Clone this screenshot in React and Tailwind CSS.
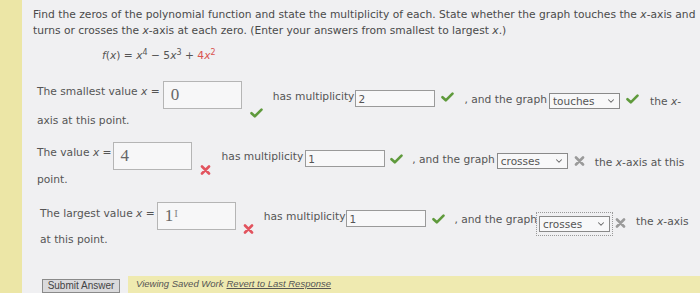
import { ChevronDown } from "lucide-react";

function Check({ className = "" }) {
  return (
    <svg width="13" height="10" viewBox="0 0 13 10" className={`shrink-0 ${className}`}>
      <path d="M1.5 5.2 L4.8 8.3 L11.5 1.6" fill="none" stroke="#5f9a3c" strokeWidth="2.6" strokeLinecap="round" strokeLinejoin="round" />
    </svg>
  );
}

function Cross({ color = "#e2535e", className = "" }) {
  return (
    <svg width="11" height="10" viewBox="0 0 11 10" className={`shrink-0 ${className}`}>
      <path d="M2 1.5 L9 8.5 M9 1.5 L2 8.5" fill="none" stroke={color} strokeWidth="2.6" strokeLinecap="round" />
    </svg>
  );
}

function X() {
  return <span className="italic">x</span>;
}

function BigInput({ value, cursor, className = "" }) {
  return (
    <div className={`flex h-[28px] w-[79px] shrink-0 items-center border border-[#b5b5b5] bg-[#f7f7f8] pl-[7px] font-['Liberation_Serif',serif] text-[17px] text-[#666] ${className}`}>
      {value}
      {cursor && <span className="-mt-[6px] ml-[1px] text-[11px] text-[#888]">I</span>}
    </div>
  );
}

function SmallInput({ value, className = "" }) {
  return (
    <div className={`flex h-[17px] w-[80px] shrink-0 items-center border border-[#9a9a9a] bg-[#f8f8f9] pl-[2px] text-[10.5px] text-[#555] ${className}`}>
      {value}
    </div>
  );
}

function Select({ value, focused, className = "" }) {
  const box = (
    <div className="flex h-[16px] w-[71px] items-center justify-between border border-[#8a8a8a] bg-[#f8f8f9] px-[3px] text-[10.5px] text-[#555]">
      {value}
      <ChevronDown size={10} strokeWidth={2.5} className="text-[#666]" />
    </div>
  );
  if (!focused) return <div className={`shrink-0 ${className}`}>{box}</div>;
  return <div className={`shrink-0 border border-dotted border-[#999] px-[2px] py-[3px] ${className}`}>{box}</div>;
}

export default function App() {
  return (
    <div className="flex h-[293px] w-[700px] overflow-hidden bg-[#f0f0f2] font-['DejaVu_Sans',sans-serif] text-[10.7px] text-[#555]">
      <div className="w-[22px] shrink-0 bg-[#ece6a6]" />
      <div className="flex min-w-0 flex-1 flex-col">
        <p className="whitespace-nowrap pl-[11px] pt-[7px] leading-[16px] text-[#4a4a4a]">
          Find the zeros of the polynomial function and state the multiplicity of each. State whether the graph touches the <X />-axis and
          <br />
          turns or crosses the <X />-axis at each zero. (Enter your answers from smallest to largest <X />.)
        </p>

        <div className="mt-[9px] h-[16px] pl-[80px] leading-[16px] text-[#555]">
          <span className="italic">f</span>(<X />) = <X />
          <sup className="text-[8px] leading-none">4</sup> − 5<X />
          <sup className="text-[8px] leading-none">3</sup> + <span className="text-[#d9534f]">4<X /><sup className="text-[8px] leading-none">2</sup></span>
        </div>

        {/* row 1 */}
        <div className="mt-[17px] flex h-[28px] items-start whitespace-nowrap pl-[15px] leading-[16px]">
          <span className="mt-[3px]">The smallest value <X /> =</span>
          <BigInput value="0" className="ml-[3px]" />
          <Check className="ml-[8px] mt-[27px]" />
          <span className="ml-[10px] mt-[8px]">has multiplicity</span>
          <SmallInput value="2" className="ml-[1px] mt-[9px]" />
          <Check className="ml-[6px] mt-[11px]" />
          <span className="ml-[10px] mt-[11px]">, and the graph</span>
          <Select value="touches" className="ml-[2px] mt-[12px]" />
          <Check className="ml-[6px] mt-[13px]" />
          <span className="ml-[11px] mt-[13px]">the <X />-</span>
        </div>
        <div className="mt-[4px] pl-[15px] leading-[16px]">axis at this point.</div>

        {/* row 2 */}
        <div className="mt-[13px] flex h-[28px] items-start whitespace-nowrap pl-[15px] leading-[16px]">
          <span className="mt-[3px]">The value <X /> =</span>
          <BigInput value="4" className="ml-[1px]" />
          <Cross className="ml-[8px] mt-[23px]" />
          <span className="ml-[11px] mt-[7px]">has multiplicity</span>
          <SmallInput value="1" className="ml-[2px] mt-[8px]" />
          <Check className="ml-[5px] mt-[12px]" />
          <span className="ml-[9px] mt-[10px]">, and the graph</span>
          <Select value="crosses" className="ml-[2px] mt-[11px]" />
          <Cross color="#9a9a9a" className="ml-[6px] mt-[14px]" />
          <span className="ml-[10px] mt-[13px]">the <X />-axis at this</span>
        </div>
        <div className="mt-[2px] pl-[15px] leading-[16px]">point.</div>

        {/* row 3 */}
        <div className="mt-[14px] flex h-[28px] items-start whitespace-nowrap pl-[18px] leading-[16px]">
          <span className="mt-[4px]">The largest value <X /> =</span>
          <BigInput value="1" cursor className="ml-[2px]" />
          <Cross className="ml-[7px] mt-[22px]" />
          <span className="ml-[10px] mt-[7px]">has multiplicity</span>
          <SmallInput value="1" className="ml-[1px] mt-[8px]" />
          <Check className="ml-[6px] mt-[12px]" />
          <span className="ml-[9px] mt-[10px]">, and the graph</span>
          <Select value="crosses" focused className="-ml-[1px] mt-[10px]" />
          <Cross color="#9a9a9a" className="ml-[2px] mt-[16px]" />
          <span className="ml-[10px] mt-[12px]">the <X />-axis</span>
        </div>
        <div className="mt-[2px] pl-[18px] leading-[16px]">at this point.</div>

        <div className="mt-auto flex items-end">
          <button className="ml-[20px] h-[14px] w-[78px] border border-[#8a8a8a] bg-[#dadadc] font-['Liberation_Sans',sans-serif] text-[10px] leading-[12px] text-[#444]">
            Submit Answer
          </button>
          <div className="ml-[8px] flex h-[17px] flex-1 items-start bg-[#efeab0] pl-[8px] pt-[1px] font-['Liberation_Sans',sans-serif] text-[9.5px] italic text-[#555]">
            Viewing Saved Work <span className="ml-[3px] underline">Revert to Last Response</span>
          </div>
        </div>
      </div>
    </div>
  );
}
